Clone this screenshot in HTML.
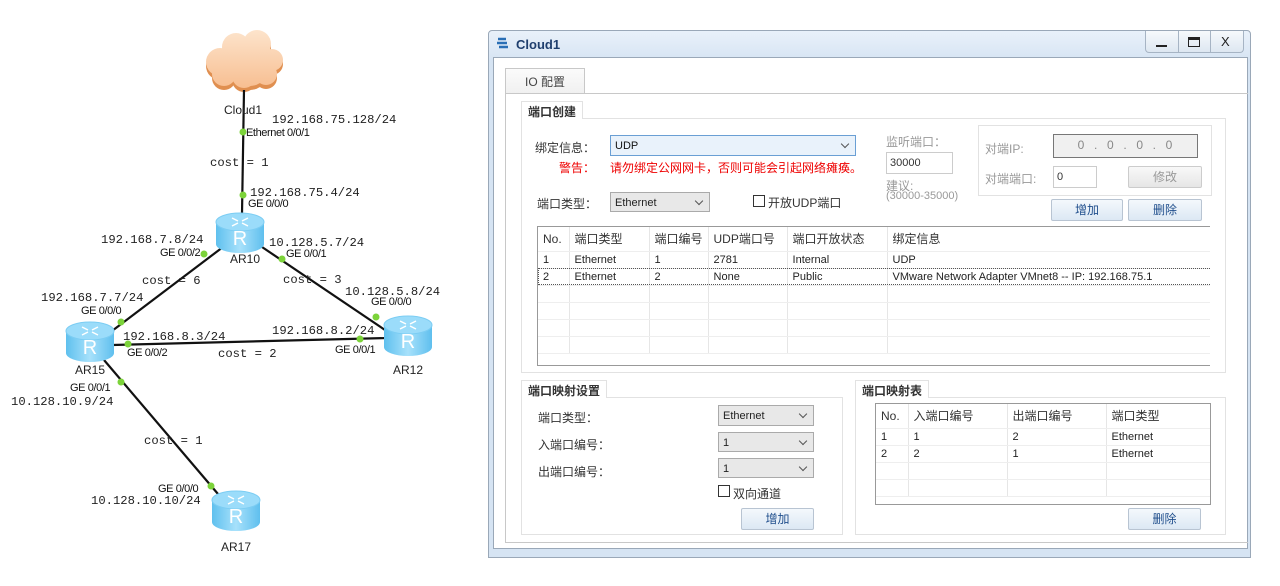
<!DOCTYPE html>
<html><head><meta charset="utf-8"><style>
*{box-sizing:border-box;margin:0;padding:0}
body{width:1280px;height:586px;background:#fff;position:relative;overflow:hidden;font-family:"Liberation Sans","Noto Sans CJK SC",sans-serif;font-size:12px;color:#222}
.a{position:absolute}
.lbl{position:absolute;font-size:12px;color:#333;white-space:nowrap}
.sel{position:absolute;border:1px solid #aaa;background:#e8e8e8;font-size:11px;padding:3px 4px;line-height:14px}
.sel:after{content:"";position:absolute;right:7px;top:5px;width:5px;height:5px;border-right:1px solid #555;border-bottom:1px solid #555;transform:rotate(45deg)}
.btn{position:absolute;border:1px solid #b8c4d2;border-radius:2px;background:linear-gradient(#f4f8fc,#dce8f4);color:#1f4e8c;font-size:12px;text-align:center;line-height:20px}
.grp{position:absolute;border:1px solid #e2e2e2}
.gtab{position:absolute;font-weight:bold;font-size:12px;color:#333;background:#fff;border:1px solid #e2e2e2;border-bottom:none;padding:1px 6px 0 6px;height:18px}
table{border-collapse:collapse;font-size:11px}
td{border-right:1px solid #e6e6e6;border-bottom:1px solid #eee;padding:0 5px;height:17px;white-space:nowrap;color:#222}
tr.h td{height:24px;font-size:12px;color:#333}
</style></head><body>
<svg class="a" style="left:0;top:0" width="480" height="586">
<defs>
<linearGradient id="rg" x1="0" y1="0" x2="1" y2="0"><stop offset="0" stop-color="#5fc0ee"/><stop offset=".5" stop-color="#a7e1fb"/><stop offset="1" stop-color="#5fbfee"/></linearGradient>
<linearGradient id="cg" gradientUnits="userSpaceOnUse" x1="0" y1="30" x2="0" y2="90"><stop offset="0" stop-color="#fde4cc"/><stop offset="1" stop-color="#f7bd8f"/></linearGradient>
<g id="rt"><path d="M-24,-12 L-24,10 A24,9 0 0 0 24,10 L24,-12 Z" fill="url(#rg)"/><ellipse cx="0" cy="-12" rx="24" ry="9" fill="#9bdcfa" stroke="#7ccdf3"/><path d="M-8,-16 l6,3 M8,-16 l-6,3 M-8,-8 l6,-3 M8,-8 l-6,-3" stroke="#fff" stroke-width="1.5"/><text x="0" y="11" font-family="Liberation Sans" font-size="20" fill="#fff" text-anchor="middle">R</text></g>
<g id="cl"><circle cx="220" cy="62" r="14"/><circle cx="236" cy="47" r="14"/><circle cx="257" cy="44" r="14"/><circle cx="272" cy="60" r="11"/><circle cx="250" cy="68" r="18"/><circle cx="224" cy="74" r="12"/><circle cx="266" cy="74" r="11"/><circle cx="244" cy="76" r="12"/></g>
</defs>
<g fill="#e08f50" transform="translate(0,4)"><use href="#cl"/></g>
<g fill="url(#cg)"><use href="#cl"/></g>
<g stroke="#111" stroke-width="2.2">
<line x1="244" y1="90" x2="242" y2="214"/>
<line x1="223" y1="247" x2="100" y2="340"/>
<line x1="262" y1="247" x2="388" y2="332"/>
<line x1="112" y1="345" x2="388" y2="338"/>
<line x1="104" y1="360" x2="218" y2="494"/>
</g>
<use href="#rt" x="240" y="234"/>
<use href="#rt" x="90" y="343"/>
<use href="#rt" x="408" y="337"/>
<use href="#rt" x="236" y="512"/>
<g fill="#7cd33a">
<circle cx="243" cy="132" r="3.5"/><circle cx="243" cy="195" r="3.5"/><circle cx="204" cy="254" r="3.5"/><circle cx="282" cy="259" r="3.5"/><circle cx="376" cy="317" r="3.5"/><circle cx="121" cy="322" r="3.5"/><circle cx="128" cy="344" r="3.5"/><circle cx="360" cy="339" r="3.5"/><circle cx="121" cy="382" r="3.5"/><circle cx="211" cy="486" r="3.5"/>
</g>
<g font-family="Liberation Mono,monospace" font-size="12.2" fill="#222" dominant-baseline="middle">
<text x="272" y="120">192.168.75.128/24</text>
<text x="210" y="163">cost = 1</text>
<text x="250" y="193">192.168.75.4/24</text>
<text x="101" y="240">192.168.7.8/24</text>
<text x="269" y="243">10.128.5.7/24</text>
<text x="142" y="281">cost = 6</text>
<text x="283" y="280">cost = 3</text>
<text x="345" y="292">10.128.5.8/24</text>
<text x="41" y="298">192.168.7.7/24</text>
<text x="123" y="337">192.168.8.3/24</text>
<text x="272" y="331">192.168.8.2/24</text>
<text x="218" y="354">cost = 2</text>
<text x="11" y="402">10.128.10.9/24</text>
<text x="144" y="441">cost = 1</text>
<text x="91" y="501">10.128.10.10/24</text>
</g>
<g font-family="Liberation Sans,sans-serif" font-size="11" fill="#111" dominant-baseline="middle" letter-spacing="-0.4">
<text x="246" y="133">Ethernet 0/0/1</text>
<text x="248" y="204">GE 0/0/0</text>
<text x="160" y="253">GE 0/0/2</text>
<text x="286" y="254">GE 0/0/1</text>
<text x="371" y="302">GE 0/0/0</text>
<text x="81" y="311">GE 0/0/0</text>
<text x="127" y="353">GE 0/0/2</text>
<text x="335" y="350">GE 0/0/1</text>
<text x="70" y="388">GE 0/0/1</text>
<text x="158" y="489">GE 0/0/0</text>
</g>
<g font-family="Liberation Sans,sans-serif" font-size="12" fill="#222" dominant-baseline="middle">
<text x="224" y="111">Cloud1</text>
<text x="230" y="260">AR10</text>
<text x="393" y="371">AR12</text>
<text x="75" y="371">AR15</text>
<text x="221" y="548">AR17</text>
</g>
</svg>

<div class="a" style="left:488px;top:30px;width:763px;height:528px;border:1px solid #9aa8b8;border-radius:4px 4px 0 0;background:linear-gradient(#e9f1fa,#d6e4f3 30px,#d6e4f3)"></div>
<div class="a" style="left:496px;top:36px;width:14px;height:14px">
<svg width="14" height="14"><path d="M2,3 h8 M1,7 h10 M3,11 h9" stroke="#2a6fb5" stroke-width="2.4"/></svg></div>
<div class="a" style="left:516px;top:37px;font-size:13px;font-weight:bold;color:#1f3f6e">Cloud1</div>
<div class="a" style="left:1145px;top:31px;width:99px;height:22px;border:1px solid #a6b4c4;border-top:none;border-radius:0 0 4px 4px;background:linear-gradient(#f6f9fc,#dde7f1)"></div>
<div class="a" style="left:1178px;top:31px;width:1px;height:22px;background:#a6b4c4"></div>
<div class="a" style="left:1210px;top:31px;width:1px;height:22px;background:#a6b4c4"></div>
<div class="a" style="left:1156px;top:45px;width:11px;height:2px;background:#222"></div>
<div class="a" style="left:1188px;top:37px;width:12px;height:10px;border:1px solid #222;border-top:3px solid #222"></div>
<div class="a" style="left:1221px;top:34px;font-size:13px;color:#222">X</div>
<div class="a" style="left:493px;top:57px;width:755px;height:492px;background:#fff;border:1px solid #9aa8b8"></div>
<div class="a" style="left:505px;top:68px;width:80px;height:26px;border:1px solid #c8c8c8;border-bottom:none;background:linear-gradient(#fbfbfb,#f0f0f0);font-size:12px;color:#444;text-align:center;line-height:26px">IO 配置</div>
<div class="a" style="left:505px;top:93px;width:743px;height:450px;border:1px solid #c8c8c8;border-right:none"></div>

<div class="grp" style="left:521px;top:118px;width:705px;height:255px"></div>
<div class="gtab" style="left:521px;top:101px">端口创建</div>
<div class="lbl" style="left:535px;top:139px">绑定信息：</div>
<div class="sel" style="left:610px;top:135px;width:246px;height:21px;background:#e9f2fb;border-color:#6a9fd4;color:#111">UDP</div>
<div class="lbl" style="left:559px;top:159px;color:#e00">警告：</div>
<div class="lbl" style="left:610px;top:159px;color:#e00">请勿绑定公网网卡，否则可能会引起网络瘫痪。</div>
<div class="lbl" style="left:537px;top:195px">端口类型：</div>
<div class="sel" style="left:610px;top:192px;width:100px;height:20px">Ethernet</div>
<div class="a" style="left:753px;top:195px;width:12px;height:12px;border:1px solid #333;background:#fff"></div>
<div class="lbl" style="left:768px;top:194px">开放UDP端口</div>
<div class="lbl" style="left:886px;top:133px;color:#999">监听端口：</div>
<div class="a" style="left:886px;top:152px;width:67px;height:22px;border:1px solid #ccc;font-size:11px;padding:4px 3px;color:#333">30000</div>
<div class="lbl" style="left:886px;top:177px;color:#999">建议:</div>
<div class="lbl" style="left:886px;top:190px;color:#999;font-size:11px">(30000-35000)</div>
<div class="a" style="left:978px;top:125px;width:234px;height:71px;border:1px solid #e2e2e2"></div>
<div class="lbl" style="left:985px;top:140px;color:#999">对端IP:</div>
<div class="a" style="left:1053px;top:134px;width:145px;height:24px;border:1px solid #777;background:#f0f0f0;color:#888;font-size:12px;line-height:20px;text-align:center;letter-spacing:1px">0 &nbsp;. &nbsp;0 &nbsp;. &nbsp;0 &nbsp;. &nbsp;0</div>
<div class="lbl" style="left:985px;top:170px;color:#999">对端端口:</div>
<div class="a" style="left:1053px;top:166px;width:44px;height:22px;border:1px solid #ccc;font-size:11px;padding:4px 3px;color:#333">0</div>
<div class="btn" style="left:1128px;top:166px;width:74px;height:22px;color:#999;border-color:#ccc;background:linear-gradient(#f8f8f8,#e6e6e6)">修改</div>
<div class="btn" style="left:1051px;top:199px;width:72px;height:22px">增加</div>
<div class="btn" style="left:1128px;top:199px;width:74px;height:22px">删除</div>
<div class="a" style="left:537px;top:226px;width:673px;height:140px;border:1px solid #999;border-right:none;overflow:hidden">
<table style="width:700px">
<tr class="h"><td style="width:31px">No.</td><td style="width:80px">端口类型</td><td style="width:59px">端口编号</td><td style="width:79px">UDP端口号</td><td style="width:100px">端口开放状态</td><td>绑定信息</td></tr>
<tr><td>1</td><td>Ethernet</td><td>1</td><td>2781</td><td>Internal</td><td>UDP</td></tr>
<tr style="outline:1px dotted #555;outline-offset:-1px"><td>2</td><td>Ethernet</td><td>2</td><td>None</td><td>Public</td><td>VMware Network Adapter VMnet8 -- IP: 192.168.75.1</td></tr>
<tr><td></td><td></td><td></td><td></td><td></td><td></td></tr>
<tr><td></td><td></td><td></td><td></td><td></td><td></td></tr>
<tr><td></td><td></td><td></td><td></td><td></td><td></td></tr>
<tr><td></td><td></td><td></td><td></td><td></td><td></td></tr>
</table></div>

<div class="grp" style="left:521px;top:397px;width:322px;height:138px"></div>
<div class="gtab" style="left:521px;top:380px">端口映射设置</div>
<div class="lbl" style="left:538px;top:409px">端口类型：</div>
<div class="lbl" style="left:538px;top:436px">入端口编号：</div>
<div class="lbl" style="left:538px;top:463px">出端口编号：</div>
<div class="sel" style="left:718px;top:405px;width:96px;height:21px">Ethernet</div>
<div class="sel" style="left:718px;top:432px;width:96px;height:20px">1</div>
<div class="sel" style="left:718px;top:458px;width:96px;height:20px">1</div>
<div class="a" style="left:718px;top:485px;width:12px;height:12px;border:1px solid #333;background:#fff"></div>
<div class="lbl" style="left:733px;top:485px">双向通道</div>
<div class="btn" style="left:741px;top:508px;width:73px;height:22px">增加</div>

<div class="grp" style="left:855px;top:397px;width:371px;height:138px"></div>
<div class="gtab" style="left:855px;top:380px">端口映射表</div>
<div class="a" style="left:875px;top:403px;width:336px;height:102px;border:1px solid #999;overflow:hidden">
<table style="width:340px">
<tr class="h"><td style="width:32px">No.</td><td style="width:99px">入端口编号</td><td style="width:99px">出端口编号</td><td>端口类型</td></tr>
<tr><td>1</td><td>1</td><td>2</td><td>Ethernet</td></tr>
<tr><td>2</td><td>2</td><td>1</td><td>Ethernet</td></tr>
<tr><td></td><td></td><td></td><td></td></tr>
<tr><td></td><td></td><td></td><td></td></tr>
</table></div>
<div class="btn" style="left:1128px;top:508px;width:73px;height:22px">删除</div>
</body></html>
